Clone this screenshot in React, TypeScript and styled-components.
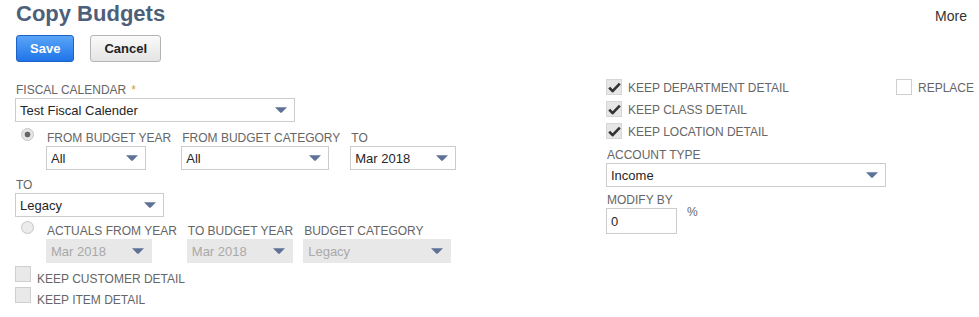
import React from "react";
import styled, { createGlobalStyle } from "styled-components";

const GlobalStyle = createGlobalStyle`
  html, body { margin: 0; padding: 0; background: #ffffff; overflow: hidden; }
  body { font-family: "Liberation Sans", Arial, sans-serif; }
  * { box-sizing: border-box; }
`;

const Page = styled.div`
  width: 979px;
  height: 317px;
  padding: 0 0 0 15px;
  overflow: hidden;
`;

const Header = styled.div`
  display: flex;
  justify-content: space-between;
  align-items: baseline;
`;

const Title = styled.h1`
  margin: 0;
  padding-left: 1px;
  font-size: 22px;
  line-height: 27px;
  font-weight: bold;
  color: #4d5f79;
`;

const MoreLink = styled.span`
  margin-right: 12px;
  font-size: 14px;
  color: #333333;
`;

const ButtonBar = styled.div`
  display: flex;
  gap: 16px;
  margin-top: 8px;
  padding-left: 1px;
`;

const Button = styled.button<{ $primary?: boolean }>`
  height: 27px;
  padding: 0 13px;
  border-radius: 3px;
  font-family: "Liberation Sans", Arial, sans-serif;
  font-size: 13px;
  font-weight: bold;
  border: 1px solid ${(p) => (p.$primary ? "#1d62c4" : "#b4b4b4")};
  color: ${(p) => (p.$primary ? "#ffffff" : "#222222")};
  background: ${(p) =>
    p.$primary
      ? "linear-gradient(#5aa5f8, #1f74e8)"
      : "linear-gradient(#fafafa, #e4e4e4)"};
`;

const Form = styled.div`
  display: flex;
  margin-top: 16px;
`;

const LeftColumn = styled.div`
  flex: none;
  width: 591px;
  display: flex;
  flex-direction: column;
`;

const RightColumn = styled.div`
  flex: none;
  display: flex;
  flex-direction: column;
`;

const Field = styled.div<{ $mt?: number }>`
  display: flex;
  flex-direction: column;
  gap: 1px;
  margin-top: ${(p) => p.$mt ?? 0}px;
`;

const Label = styled.div`
  padding-left: 1px;
  font-size: 12px;
  line-height: 14px;
  height: 14px;
  color: #666666;
  text-transform: uppercase;
  white-space: nowrap;
`;

const Required = styled.span`
  color: #d69a2d;
  margin-left: 5px;
`;

const SelectBox = styled.div<{ $w: number; $disabled?: boolean }>`
  display: flex;
  align-items: center;
  width: ${(p) => p.$w}px;
  height: 24px;
  padding-left: 4px;
  border: 1px solid ${(p) => (p.$disabled ? "#e8e8e8" : "#cccccc")};
  background: ${(p) => (p.$disabled ? "#e8e8e8" : "#ffffff")};
  color: ${(p) => (p.$disabled ? "#a9a9a9" : "#262626")};
  font-size: 13px;
`;

const SelectValue = styled.span`
  flex: 1;
  white-space: nowrap;
  overflow: hidden;
`;

const Arrow = styled.svg`
  width: 12px;
  height: 6px;
  margin-right: 7px;
  flex: none;
`;

const Select = ({ w, value, disabled }: { w: number; value: string; disabled?: boolean }) => (
  <SelectBox $w={w} $disabled={disabled}>
    <SelectValue>{value}</SelectValue>
    <Arrow viewBox="0 0 12 6">
      <polygon points="0,0.3 12,0.3 6.6,5.8 5.4,5.8" fill="#5d7296" />
    </Arrow>
  </SelectBox>
);

const RadioRow = styled.div<{ $mt: number }>`
  display: flex;
  align-items: flex-start;
  margin-top: ${(p) => p.$mt}px;
`;

const Radio = styled.span<{ $checked?: boolean }>`
  flex: none;
  width: 13px;
  height: 13px;
  margin: -3px 12px 0 6px;
  border-radius: 50%;
  border: 1px solid #c6c6c6;
  background: ${(p) => (p.$checked ? "radial-gradient(circle, #666 0 2.6px, #e4e4e4 3.2px)" : "#ebebeb")};
`;

const FieldGroup = styled.div`
  display: flex;
  gap: 10px;
`;

const CheckRow = styled.div<{ $mt?: number }>`
  display: flex;
  align-items: flex-end;
  margin-top: ${(p) => p.$mt ?? 0}px;
`;

const Box = styled.span<{ $variant: "checked" | "disabled" | "empty" }>`
  flex: none;
  display: flex;
  align-items: center;
  justify-content: center;
  width: 16px;
  height: 16px;
  margin-right: 6px;
  border: 1px solid ${(p) => (p.$variant === "checked" ? "#d6d6d6" : "#cfcfcf")};
  background: ${(p) =>
    p.$variant === "checked" ? "#e6e6e6" : p.$variant === "disabled" ? "#e9e9e9" : "#ffffff"};
`;

const CheckText = styled.span<{ $drop: number }>`
  font-size: 12px;
  line-height: 14px;
  color: #666666;
  white-space: nowrap;
  margin-bottom: ${(p) => -p.$drop}px;
`;

const Check = ({
  label,
  variant,
  drop = 0,
  mt = 0,
}: {
  label: string;
  variant: "checked" | "disabled" | "empty";
  drop?: number;
  mt?: number;
}) => (
  <CheckRow $mt={mt}>
    <Box $variant={variant}>
      {variant === "checked" && (
        <svg width="13" height="11" viewBox="0 0 13 11">
          <path d="M1.2 5.6 L4.6 9.2 L11.8 1.6" stroke="#333" strokeWidth="2.6" fill="none" strokeLinejoin="round" />
        </svg>
      )}
    </Box>
    <CheckText $drop={drop}>{label}</CheckText>
  </CheckRow>
);

const TopChecks = styled.div`
  display: flex;
  align-items: flex-start;
  margin-top: 1px;
`;

const CheckStack = styled.div`
  width: 290px;
  display: flex;
  flex-direction: column;
  gap: 6px;
`;

const ModifyRow = styled.div`
  display: flex;
  align-items: flex-start;
  margin-top: 6px;
`;

const NumberInput = styled.input`
  width: 71px;
  height: 26px;
  padding: 0 4px;
  border: 1px solid #cccccc;
  font-family: "Liberation Sans", Arial, sans-serif;
  font-size: 13px;
  color: #262626;
  outline: none;
`;

const Percent = styled.span`
  margin: 12px 0 0 10px;
  font-size: 12px;
  line-height: 14px;
  color: #666666;
`;

export default function App() {
  return (
    <Page>
      <GlobalStyle />
      <Header>
        <Title>Copy Budgets</Title>
        <MoreLink>More</MoreLink>
      </Header>
      <ButtonBar>
        <Button $primary>Save</Button>
        <Button>Cancel</Button>
      </ButtonBar>
      <Form>
        <LeftColumn>
          <Field $mt={5}>
            <Label>
              Fiscal Calendar<Required>*</Required>
            </Label>
            <Select w={280} value="Test Fiscal Calender" />
          </Field>
          <RadioRow $mt={9}>
            <Radio $checked />
            <FieldGroup>
              <Field>
                <Label>From Budget Year</Label>
                <Select w={100} value="All" />
              </Field>
              <Field>
                <Label>From Budget Category</Label>
                <Select w={148} value="All" />
              </Field>
              <Field>
                <Label>To</Label>
                <Select w={106} value="Mar 2018" />
              </Field>
            </FieldGroup>
          </RadioRow>
          <Field $mt={8}>
            <Label>To</Label>
            <Select w={149} value="Legacy" />
          </Field>
          <RadioRow $mt={7}>
            <Radio />
            <FieldGroup>
              <Field>
                <Label>Actuals From Year</Label>
                <Select w={106} value="Mar 2018" disabled />
              </Field>
              <Field>
                <Label>To Budget Year</Label>
                <Select w={106} value="Mar 2018" disabled />
              </Field>
              <Field>
                <Label>Budget Category</Label>
                <Select w={148} value="Legacy" disabled />
              </Field>
            </FieldGroup>
          </RadioRow>
          <Check mt={3} variant="disabled" label="KEEP CUSTOMER DETAIL" drop={4} />
          <Check mt={5} variant="disabled" label="KEEP ITEM DETAIL" drop={4} />
        </LeftColumn>
        <RightColumn>
          <TopChecks>
            <CheckStack>
              <Check variant="checked" label="KEEP DEPARTMENT DETAIL" />
              <Check variant="checked" label="KEEP CLASS DETAIL" />
              <Check variant="checked" label="KEEP LOCATION DETAIL" />
            </CheckStack>
            <Check variant="empty" label="REPLACE" />
          </TopChecks>
          <Field $mt={9}>
            <Label>Account Type</Label>
            <Select w={280} value="Income" />
          </Field>
          <ModifyRow>
            <Field>
              <Label>Modify By</Label>
              <NumberInput value="0" readOnly />
            </Field>
            <Percent>%</Percent>
          </ModifyRow>
        </RightColumn>
      </Form>
    </Page>
  );
}
